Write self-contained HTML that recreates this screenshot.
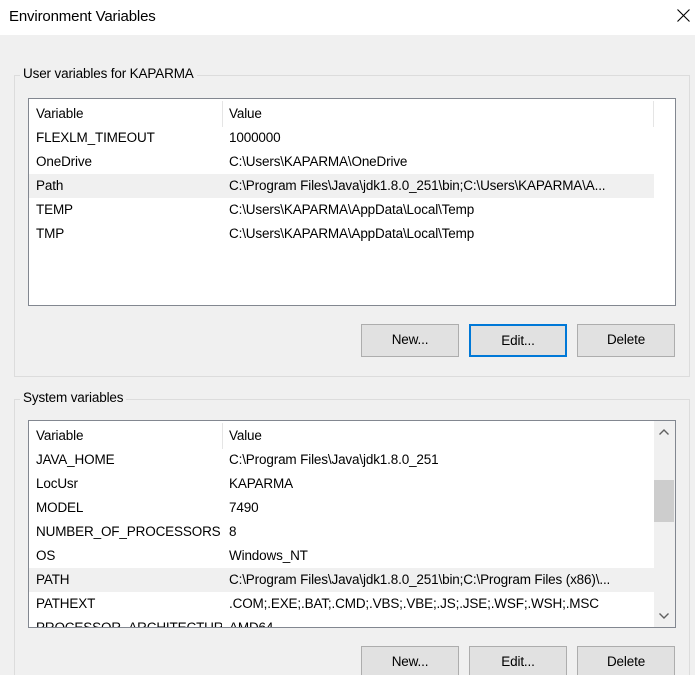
<!DOCTYPE html><html><head><style>
*{margin:0;padding:0;box-sizing:border-box}
html,body{width:695px;height:675px;overflow:hidden}
body{background:#f0f0f0;font-family:"Liberation Sans",sans-serif;font-size:13.5px;letter-spacing:-0.15px;color:#000;position:relative}
.a{position:absolute}
.title{left:0;top:0;width:695px;height:35px;background:#fff}
.grp{border:1px solid #dcdcdc}
.leg{background:#f0f0f0;padding:0 3px}
.list{background:#fff;border:1px solid #828790;overflow:hidden}
.row{position:absolute;left:0;height:24px;line-height:24px;width:625px;white-space:nowrap}
.row span{position:absolute}
.btn{background:#e1e1e1;border:1px solid #adadad;text-align:center;line-height:30px;height:33px;width:98px}
</style></head><body>
<div class="a title"></div>
<div class="a" style="left:9px;top:8px;font-size:15px">Environment Variables</div>
<svg class="a" style="left:677px;top:9px" width="13" height="13"><path d="M0.5 0.5L12.5 12.5M12.5 0.5L0.5 12.5" stroke="#000" stroke-width="1.1"/></svg>

<div class="a grp" style="left:14px;top:75px;width:676px;height:302px"></div>
<div class="a leg" style="left:20px;top:66px">User variables for KAPARMA</div>
<div class="a list" style="left:28px;top:98px;width:648px;height:208px">
 <div class="a" style="left:193px;top:2px;width:1px;height:26px;background:#e5e5e5"></div>
 <div class="a" style="left:624px;top:2px;width:1px;height:26px;background:#e5e5e5"></div>
 <div class="row" style="top:3px"><span style="left:7px">Variable</span><span style="left:200px">Value</span></div>
 <div class="row" style="top:27px"><span style="left:7px">FLEXLM_TIMEOUT</span><span style="left:200px">1000000</span></div>
 <div class="row" style="top:51px"><span style="left:7px">OneDrive</span><span style="left:200px">C:\Users\KAPARMA\OneDrive</span></div>
 <div class="row" style="top:75px;background:#f0f0f0"><span style="left:7px">Path</span><span style="left:200px">C:\Program Files\Java\jdk1.8.0_251\bin;C:\Users\KAPARMA\A...</span></div>
 <div class="row" style="top:99px"><span style="left:7px">TEMP</span><span style="left:200px">C:\Users\KAPARMA\AppData\Local\Temp</span></div>
 <div class="row" style="top:123px"><span style="left:7px">TMP</span><span style="left:200px">C:\Users\KAPARMA\AppData\Local\Temp</span></div>
</div>
<div class="a btn" style="left:361px;top:324px">New...</div>
<div class="a btn" style="left:469px;top:324px;border:2px solid #0078d7;line-height:29px">Edit...</div>
<div class="a btn" style="left:577px;top:324px">Delete</div>

<div class="a grp" style="left:14px;top:399px;width:676px;height:290px"></div>
<div class="a leg" style="left:20px;top:390px">System variables</div>
<div class="a list" style="left:28px;top:420px;width:648px;height:208px">
 <div class="a" style="left:193px;top:2px;width:1px;height:26px;background:#e5e5e5"></div>
 <div class="row" style="top:3px"><span style="left:7px">Variable</span><span style="left:200px">Value</span></div>
 <div class="row" style="top:27px"><span style="left:7px">JAVA_HOME</span><span style="left:200px">C:\Program Files\Java\jdk1.8.0_251</span></div>
 <div class="row" style="top:51px"><span style="left:7px">LocUsr</span><span style="left:200px">KAPARMA</span></div>
 <div class="row" style="top:75px"><span style="left:7px">MODEL</span><span style="left:200px">7490</span></div>
 <div class="row" style="top:99px"><span style="left:7px">NUMBER_OF_PROCESSORS</span><span style="left:200px">8</span></div>
 <div class="row" style="top:123px"><span style="left:7px">OS</span><span style="left:200px">Windows_NT</span></div>
 <div class="row" style="top:147px;background:#f0f0f0"><span style="left:7px">PATH</span><span style="left:200px">C:\Program Files\Java\jdk1.8.0_251\bin;C:\Program Files (x86)\...</span></div>
 <div class="row" style="top:171px"><span style="left:7px">PATHEXT</span><span style="left:200px">.COM;.EXE;.BAT;.CMD;.VBS;.VBE;.JS;.JSE;.WSF;.WSH;.MSC</span></div>
 <div class="row" style="top:195px"><span style="left:7px;width:186px;overflow:hidden">PROCESSOR_ARCHITECTURE</span><span style="left:200px">AMD64</span></div>
 <div class="a" style="left:625px;top:0;width:21px;height:206px;background:#f0f0f0"></div>
 <svg class="a" style="left:629px;top:7px" width="12" height="8"><path d="M1.5 6.5L6 2L10.5 6.5" stroke="#606060" stroke-width="1.4" fill="none"/></svg>
 <div class="a" style="left:625px;top:59px;width:20px;height:42px;background:#cdcdcd"></div>
 <svg class="a" style="left:629px;top:191px" width="12" height="8"><path d="M1.5 1.5L6 6L10.5 1.5" stroke="#606060" stroke-width="1.4" fill="none"/></svg>
</div>
<div class="a btn" style="left:361px;top:646px">New...</div>
<div class="a btn" style="left:469px;top:646px">Edit...</div>
<div class="a btn" style="left:577px;top:646px">Delete</div>
</body></html>
